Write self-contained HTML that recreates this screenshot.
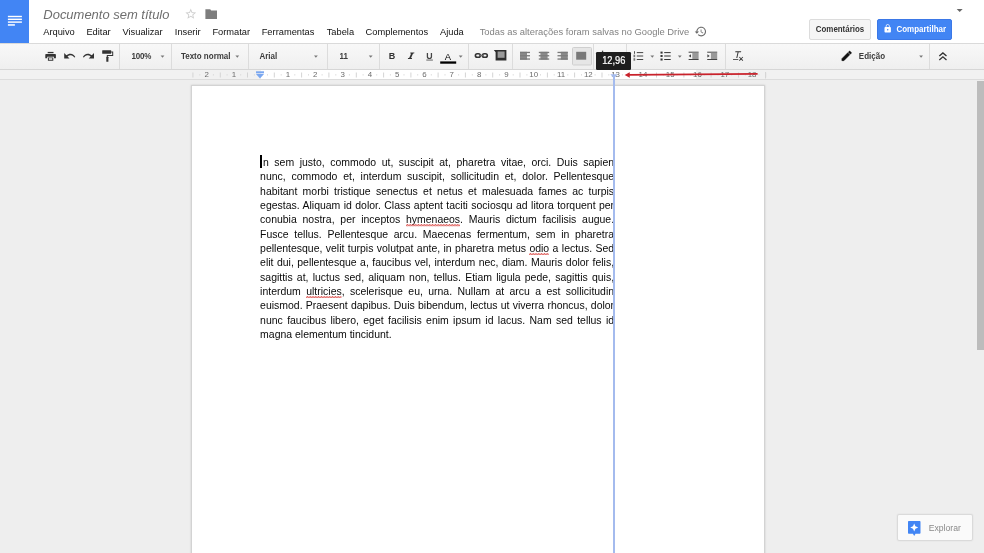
<!DOCTYPE html>
<html><head><meta charset="utf-8">
<style>
*{box-sizing:border-box;margin:0;padding:0}
html,body{width:984px;height:553px;overflow:hidden;background:#eeeeee;font-family:"Liberation Sans",sans-serif;}
body{position:relative}
.abs{position:absolute}
#hdr{left:0;top:0;width:984px;height:43px;background:#fff}
#logo{left:0;top:0;width:28.7px;height:42.6px;background:#4285f4}
#title{left:43.3px;top:6.600px;font-size:12.980px;font-style:italic;color:#6e6e6e;white-space:nowrap;line-height:16px}
.menu{top:25.800px;font-size:9.3px;color:#111;white-space:nowrap;line-height:12px}
#saved{left:479.700px;top:25.800px;font-size:9.400px;color:#828282;white-space:nowrap;line-height:12px}
#tb{left:0;top:43px;width:984px;height:26.500px;background:linear-gradient(#f8f8f8,#efefef);border-top:1px solid #dadada;border-bottom:1px solid #d6d6d6}
.sep{top:44px;width:1px;height:25px;background:#dcdcdc}
.tbt{transform:scaleY(1.1);top:51.900px;font-size:8px;font-weight:bold;color:#3c3c3c;white-space:nowrap;line-height:10px}
.fb{top:50.900px;font-size:9px;font-weight:bold;color:#333;line-height:11px;white-space:nowrap}
#ruler{left:0;top:69.500px;width:984px;height:10px;background:#f1f1f1;border-bottom:1px solid #dcdcdc}
#rulerw{left:260.500px;top:70px;width:435px;height:9px;background:#fff}
.rn{top:70.300px;font-size:7.900px;color:#6c6c6c;line-height:9px;width:12px;text-align:center}
#page{left:191.200px;top:84.800px;width:574.100px;height:480px;background:#fff;border:1px solid #d3d3d3;box-shadow:0 0 2px rgba(0,0,0,.15)}
#txt{left:260.100px;top:155.900px;width:354px;font-size:10.470px;line-height:14.340px;color:#0a0a0a}
.ln{text-align:justify;text-align-last:justify;white-space:nowrap;height:14.340px}
.ln.last{text-align:left;text-align-last:left}
.ln u{text-decoration:none;position:relative}
.ln u svg{position:absolute;left:0;top:10px;width:100%;height:2.400px}
#cursor{left:260px;top:155.300px;width:1.600px;height:13px;background:#000}
#vline{left:613.100px;top:76px;width:1.700px;height:477px;background:#a4bbee}
#tip{left:596.400px;top:52.200px;width:34.800px;height:17.400px;background:#1e1e1e;color:#fff;font-size:9.300px;text-align:center;line-height:17.400px;border-radius:1.300px}
#tip span{display:inline-block;transform:scaleY(1.100) translateY(.65px);-webkit-text-stroke:.2px #fff}
#sb{left:977px;top:80.500px;width:6.500px;height:269.300px;background:#bcbcbc}
#btnc{left:809px;top:18.500px;width:62px;height:21px;background:#f5f5f5;border:1px solid #dcdcdc;border-radius:2px;font-size:7.920px;font-weight:bold;color:#333;text-align:center;line-height:19px}
#btns{left:877.300px;top:18.500px;width:75px;height:21px;background:#4285f4;border:1px solid #3b78e7;border-radius:2px;font-size:7.980px;font-weight:bold;color:#fff;line-height:19px;padding-left:18.200px}
#expl{left:897.300px;top:513.700px;width:75.400px;height:27.800px;background:#fafafa;border:1px solid #dadada;border-radius:2px;font-size:8.640px;color:#8a8a8a;line-height:27px;padding-left:30.400px;box-shadow:0 0 1.500px rgba(0,0,0,.1)}
span.sy{display:inline-block;transform:scaleY(1.1)}
#w{position:absolute;left:0;top:0;width:984px;height:553px;will-change:transform}
</style></head><body><div id="w">
<div id="hdr" class="abs"></div>
<div id="logo" class="abs"></div>
<div id="title" class="abs">Documento sem título</div>
<div class="abs menu" style="left:43.2px">Arquivo</div>
<div class="abs menu" style="left:86.4px">Editar</div>
<div class="abs menu" style="left:122.5px">Visualizar</div>
<div class="abs menu" style="left:174.8px">Inserir</div>
<div class="abs menu" style="left:212.4px">Formatar</div>
<div class="abs menu" style="left:261.7px">Ferramentas</div>
<div class="abs menu" style="left:326.7px">Tabela</div>
<div class="abs menu" style="left:365.6px">Complementos</div>
<div class="abs menu" style="left:440px">Ajuda</div>
<div id="saved" class="abs">Todas as alterações foram salvas no Google Drive</div>
<div id="btnc" class="abs"><span class="sy">Comentários</span></div>
<div id="btns" class="abs"><span class="sy">Compartilhar</span></div>
<div id="tb" class="abs"></div>
<div class="abs sep" style="left:118.9px"></div><div class="abs sep" style="left:170.8px"></div><div class="abs sep" style="left:248.0px"></div><div class="abs sep" style="left:327.4px"></div><div class="abs sep" style="left:379.3px"></div><div class="abs sep" style="left:467.9px"></div><div class="abs sep" style="left:512.1px"></div><div class="abs sep" style="left:593.0px"></div><div class="abs sep" style="left:626.2px"></div><div class="abs sep" style="left:724.6px"></div><div class="abs sep" style="left:929.1px"></div>
<div class="abs tbt" style="left:131.500px;letter-spacing:-.2px">100%</div>
<div class="abs tbt" style="left:180.900px">Texto normal</div>
<div class="abs tbt" style="left:259.400px">Arial</div>
<div class="abs tbt" style="left:339.400px">11</div>
<div class="abs tbt" style="left:858.800px">Edição</div>
<div class="abs fb" style="left:388.800px">B</div>
<div class="abs fb" style="left:426.200px;color:#444;font-size:8.800px">U</div>
<div class="abs fb" style="left:444.700px;font-weight:normal;color:#000;font-size:9.400px">A</div>
<div id="ruler" class="abs"></div>
<div id="rulerw" class="abs"></div>
<div class="abs rn" style="left:200.7px">2</div><div class="abs rn" style="left:228.0px">1</div><div class="abs rn" style="left:282.0px">1</div><div class="abs rn" style="left:309.3px">2</div><div class="abs rn" style="left:336.6px">3</div><div class="abs rn" style="left:363.9px">4</div><div class="abs rn" style="left:391.2px">5</div><div class="abs rn" style="left:418.5px">6</div><div class="abs rn" style="left:445.8px">7</div><div class="abs rn" style="left:473.1px">8</div><div class="abs rn" style="left:500.4px">9</div><div class="abs rn" style="left:527.7px">10</div><div class="abs rn" style="left:555.0px">11</div><div class="abs rn" style="left:582.3px">12</div><div class="abs rn" style="left:609.6px">13</div><div class="abs rn" style="left:636.9px">14</div><div class="abs rn" style="left:664.2px">15</div><div class="abs rn" style="left:691.5px">16</div><div class="abs rn" style="left:718.8px">17</div><div class="abs rn" style="left:746.1px">18</div>
<div id="page" class="abs"></div>
<div id="txt" class="abs">
<div class="ln">In sem justo, commodo ut, suscipit at, pharetra vitae, orci. Duis sapien</div>
<div class="ln">nunc, commodo et, interdum suscipit, sollicitudin et, dolor. Pellentesque</div>
<div class="ln">habitant morbi tristique senectus et netus et malesuada fames ac turpis</div>
<div class="ln">egestas. Aliquam id dolor. Class aptent taciti sociosqu ad litora torquent per</div>
<div class="ln">conubia nostra, per inceptos <u>hymenaeos<svg><rect width="100%" height="2.4" fill="url(#zz)"/></svg></u>. Mauris dictum facilisis augue.</div>
<div class="ln">Fusce tellus. Pellentesque arcu. Maecenas fermentum, sem in pharetra</div>
<div class="ln">pellentesque, velit turpis volutpat ante, in pharetra metus <u>odio<svg><rect width="100%" height="2.4" fill="url(#zz)"/></svg></u> a lectus. Sed</div>
<div class="ln">elit dui, pellentesque a, faucibus vel, interdum nec, diam. Mauris dolor felis,</div>
<div class="ln">sagittis at, luctus sed, aliquam non, tellus. Etiam ligula pede, sagittis quis,</div>
<div class="ln">interdum <u>ultricies<svg><rect width="100%" height="2.4" fill="url(#zz)"/></svg></u>, scelerisque eu, urna. Nullam at arcu a est sollicitudin</div>
<div class="ln">euismod. Praesent dapibus. Duis bibendum, lectus ut viverra rhoncus, dolor</div>
<div class="ln">nunc faucibus libero, eget facilisis enim ipsum id lacus. Nam sed tellus id</div>
<div class="ln last">magna elementum tincidunt.</div>
</div>
<div id="cursor" class="abs"></div>
<div id="vline" class="abs"></div>
<div id="sb" class="abs"></div>
<div id="expl" class="abs">Explorar</div>
<svg class="abs" style="left:0;top:0" width="984" height="553" viewBox="0 0 984 553">
<!-- logo lines -->
<g fill="#fff"><rect x="7.9" y="15.8" width="14" height="1.4"/><rect x="7.9" y="18.6" width="14" height="1.4"/><rect x="7.9" y="21.4" width="14" height="1.4"/><rect x="7.9" y="24.2" width="7" height="1.5"/></g>
<!-- star -->
<g transform="translate(184.300,7.500) scale(0.540)"><path fill="#cdcdcd" d="M22 9.24l-7.19-.62L12 2 9.19 8.63 2 9.24l5.46 4.73L5.82 21 12 17.27 18.18 21l-1.63-7.03L22 9.24zM12 15.4l-3.76 2.27 1-4.28-3.32-2.88 4.38-.38L12 6.1l1.71 4.04 4.38.38-3.32 2.88 1 4.28L12 15.4z"/></g>
<!-- folder -->
<path fill="#7d7d7d" d="M205.400 9.300h4.800l1 1.300h5.800v8.500h-11.600z"/>
<!-- history -->
<g transform="translate(694.200,25.100) scale(0.538)"><path fill="#6a6a6a" d="M13 3c-4.97 0-9 4.03-9 9H1l3.89 3.89.07.14L9 12H6c0-3.870 3.130-7 7-7s7 3.130 7 7-3.130 7-7 7c-1.930 0-3.680-.79-4.940-2.060l-1.420 1.420C8.270 19.990 10.510 21 13 21c4.970 0 9-4.030 9-9s-4.030-9-9-9zm-1 5v5l4.280 2.540.72-1.210-3.500-2.080V8H12z"/></g>
<!-- top right caret -->
<path d="M956.700 9h6l-3 3z" fill="#666"/>
<!-- lock -->
<g transform="translate(882.900,23.800) scale(0.400)"><path fill="#fff" d="M18 8h-1V6c0-2.760-2.240-5-5-5S7 3.240 7 6v2H6c-1.100 0-2 .9-2 2v10c0 1.100.9 2 2 2h12c1.100 0 2-.9 2-2V10c0-1.100-.9-2-2-2zm-6 9c-1.100 0-2-.9-2-2s.9-2 2-2 2 .9 2 2-.9 2-2 2zm3.100-9H8.900V6c0-1.710 1.390-3.100 3.100-3.100 1.710 0 3.100 1.390 3.100 3.100v2z"/></g>
<!-- printer -->
<g fill="#333" transform="translate(0,.3)"><rect x="47.7" y="51.6" width="5.8" height="1.3"/><path d="M46.3 53.6h8.600c.6 0 1 .4 1 1v3.400h-1.900v-1.600h-6.800v1.600h-1.900v-3.400c0-.6.400-1 1-1z"/><path d="M47.900 57.100h5.400v3.300h-5.400z M48.900 58h3.400v1.500h-3.400z" fill-rule="evenodd"/></g>
<!-- undo -->
<path fill="#333" d="M64.200 53.100v5.300h5.300l-2-2c.9-.8 2-1.200 3.200-1.200 1.600 0 3 .9 3.600 2.400l1-.5c-.9-2-2.600-3.400-4.800-3.400-1.600 0-3 .6-4.100 1.600z"/>
<!-- redo -->
<path fill="#333" d="M94 53.100v5.300h-5.300l2-2c-.9-.8-2-1.200-3.200-1.200-1.600 0-3 .9-3.600 2.400l-1-.5c.9-2 2.600-3.400 4.800-3.400 1.600 0 3 .6 4.100 1.600z"/>
<!-- paint roller -->
<g fill="#333"><rect x="102.200" y="50.200" width="9" height="3.600" rx=".5"/><path d="M111.200 51.500h2v4.400h-5.400v1.200h-1v-2.200h5.400v-2.400h-1z"/><rect x="106.300" y="56.800" width="2.100" height="5" rx=".4"/></g>
<!-- carets -->
<path d="M160.6 55.4h3.800l-1.900 2.300z" fill="#777"/><path d="M235.4 55.4h3.800l-1.900 2.300z" fill="#777"/><path d="M314 55.4h3.800l-1.900 2.300z" fill="#777"/><path d="M368.8 55.4h3.800l-1.900 2.300z" fill="#777"/><path d="M458.8 55.4h3.800l-1.900 2.300z" fill="#777"/><path d="M650.4 55.4h3.800l-1.900 2.300z" fill="#777"/><path d="M677.9 55.4h3.800l-1.900 2.300z" fill="#777"/><path d="M919.2 55.4h3.800l-1.900 2.300z" fill="#777"/>
<!-- B I U A -->
<rect x="601.900" y="50.700" width="1.300" height="1.300" fill="#444"/>
<!-- I -->
<path fill="#333" d="M410.400 52.500h4l-.3 1h-1.050l-2 4.500h1.050l-.3 1h-4l.3-1h1.050l2-4.500h-1.050z"/>
<!-- A bar -->
<rect x="440.200" y="61.400" width="16" height="2.300" fill="#000"/>
<rect x="426.300" y="59.600" width="6.600" height=".9" fill="#555"/>
<!-- link -->
<g fill="none" stroke="#333" stroke-width="1.600"><rect x="475.400" y="53.700" width="4.900" height="3.600" rx="1.800"/><rect x="482.400" y="53.700" width="4.900" height="3.600" rx="1.800"/></g><rect x="479" y="54.800" width="4.700" height="1.400" fill="#666"/>
<!-- comment -->
<path fill="#2e2e2e" d="M493.800 50.100H506.400V60.400H495.600V52.300z"/><rect x="497.600" y="51.500" width="7" height="6.300" fill="#9a9a9a"/>
<!-- selected button -->
<rect x="572.500" y="47.500" width="19" height="17.500" rx="1" fill="#e6e6e6" stroke="#cfcfcf" stroke-width="1"/>
<!-- align icons -->
<g fill="#8a8a8a"><rect x="520" y="51.800" width="7" height="7.900"/><rect x="540.400" y="51.800" width="7.200" height="7.900" fill="#8a8a8a"/><rect x="560.800" y="51.800" width="7" height="7.900"/></g>
<g fill="#7a7a7a"><rect x="538.800" y="51.800" width="10.400" height="1.300"/><rect x="538.800" y="55.100" width="10.400" height="1.300"/><rect x="538.800" y="58.400" width="10.400" height="1.300"/><rect x="520" y="51.800" width="10" height="1.300"/><rect x="520" y="55.100" width="10" height="1.300"/><rect x="520" y="58.400" width="10" height="1.300"/>
<rect x="557.500" y="51.800" width="10.300" height="1.300"/><rect x="557.500" y="55.100" width="10.300" height="1.300"/><rect x="557.500" y="58.400" width="10.300" height="1.300"/></g>
<rect x="576.200" y="51.800" width="10" height="7.900" fill="#787878"/>
<!-- numbered list -->
<g fill="#444"><rect x="636.800" y="52.100" width="6.400" height="1"/><rect x="636.800" y="55.500" width="6.400" height="1"/><rect x="636.800" y="59" width="6.400" height="1"/><rect x="634" y="51.200" width=".9" height="2.600"/><rect x="633.500" y="54.700" width="1.700" height="2.500" fill="#777"/><rect x="633.500" y="58.200" width="1.700" height="2.500" fill="#777"/></g>
<!-- bullet list -->
<g fill="#333"><rect x="664.200" y="52.100" width="6.500" height="1"/><rect x="664.200" y="55.500" width="6.500" height="1"/><rect x="664.200" y="59" width="6.500" height="1"/><rect x="660.500" y="51.600" width="2.100" height="2"/><rect x="660.500" y="55" width="2.100" height="2"/><rect x="660.500" y="58.500" width="2.100" height="2"/></g>
<!-- indent icons -->
<g fill="#444"><rect x="688.600" y="51.700" width="10" height="1"/><rect x="688.600" y="59" width="10" height="1"/><rect x="692.300" y="52.700" width="6.300" height="6.300" fill="#999"/><path d="M691 54.200v3.400l-2.300-1.700z"/>
<rect x="707.200" y="51.700" width="10" height="1"/><rect x="707.200" y="59" width="10" height="1"/><rect x="710.900" y="52.700" width="6.300" height="6.300" fill="#999"/><path d="M707.400 54.200v3.400l2.300-1.700z"/></g>
<!-- Tx -->
<g fill="#333"><path d="M735.400 51.300h5.800l-.2.900h-2.400l-1.300 5.700h-1l1.300-5.700h-2.400z"/><rect x="733" y="59.100" width="5.300" height=".8"/><path d="M739 57.300l.6-.6 1.500 1.500 1.500-1.500.6.600-1.500 1.500 1.500 1.500-.6.600-1.500-1.500-1.500 1.500-.6-.6 1.500-1.500z"/></g>
<!-- pencil -->
<g transform="translate(840.300,49.500) scale(0.530)"><path fill="#111" stroke="#111" stroke-width="1" d="M3 17.250V21h3.750L17.810 9.940l-3.750-3.750L3 17.250zM20.710 7.040c.39-.39.39-1.020 0-1.410l-2.340-2.340c-.39-.39-1.020-.39-1.410 0l-1.830 1.830 3.750 3.750 1.830-1.830z"/></g>
<!-- double chevron -->
<g fill="none" stroke="#333" stroke-width="1.300"><path d="M939.300 56.100l3.600-3.200 3.600 3.200"/><path d="M939.300 60l3.600-3.200 3.600 3.200"/></g>
<!-- ruler ticks -->
<rect x="192.4" y="72.5" width="1" height="5" fill="#d4d4d4"/><rect x="199.3" y="74.2" width="1" height="1.3" fill="#d9d9d9"/><rect x="212.9" y="74.2" width="1" height="1.3" fill="#d9d9d9"/><rect x="219.8" y="72.5" width="1" height="5" fill="#d4d4d4"/><rect x="226.6" y="74.2" width="1" height="1.3" fill="#d9d9d9"/><rect x="240.2" y="74.2" width="1" height="1.3" fill="#d9d9d9"/><rect x="247.0" y="72.5" width="1" height="5" fill="#d4d4d4"/><rect x="253.9" y="74.2" width="1" height="1.3" fill="#d9d9d9"/><rect x="267.0" y="74.2" width="1" height="1.3" fill="#d9d9d9"/><rect x="273.8" y="72.5" width="1" height="5" fill="#d4d4d4"/><rect x="280.7" y="74.2" width="1" height="1.3" fill="#d9d9d9"/><rect x="294.3" y="74.2" width="1" height="1.3" fill="#d9d9d9"/><rect x="301.1" y="72.5" width="1" height="5" fill="#d4d4d4"/><rect x="308.0" y="74.2" width="1" height="1.3" fill="#d9d9d9"/><rect x="321.6" y="74.2" width="1" height="1.3" fill="#d9d9d9"/><rect x="328.4" y="72.5" width="1" height="5" fill="#d4d4d4"/><rect x="335.3" y="74.2" width="1" height="1.3" fill="#d9d9d9"/><rect x="348.9" y="74.2" width="1" height="1.3" fill="#d9d9d9"/><rect x="355.8" y="72.5" width="1" height="5" fill="#d4d4d4"/><rect x="362.6" y="74.2" width="1" height="1.3" fill="#d9d9d9"/><rect x="376.2" y="74.2" width="1" height="1.3" fill="#d9d9d9"/><rect x="383.1" y="72.5" width="1" height="5" fill="#d4d4d4"/><rect x="389.9" y="74.2" width="1" height="1.3" fill="#d9d9d9"/><rect x="403.5" y="74.2" width="1" height="1.3" fill="#d9d9d9"/><rect x="410.4" y="72.5" width="1" height="5" fill="#d4d4d4"/><rect x="417.2" y="74.2" width="1" height="1.3" fill="#d9d9d9"/><rect x="430.8" y="74.2" width="1" height="1.3" fill="#d9d9d9"/><rect x="437.6" y="72.5" width="1" height="5" fill="#d4d4d4"/><rect x="444.5" y="74.2" width="1" height="1.3" fill="#d9d9d9"/><rect x="458.1" y="74.2" width="1" height="1.3" fill="#d9d9d9"/><rect x="464.9" y="72.5" width="1" height="5" fill="#d4d4d4"/><rect x="471.8" y="74.2" width="1" height="1.3" fill="#d9d9d9"/><rect x="485.4" y="74.2" width="1" height="1.3" fill="#d9d9d9"/><rect x="492.2" y="72.5" width="1" height="5" fill="#d4d4d4"/><rect x="499.1" y="74.2" width="1" height="1.3" fill="#d9d9d9"/><rect x="512.7" y="74.2" width="1" height="1.3" fill="#d9d9d9"/><rect x="519.5" y="72.5" width="1" height="5" fill="#d4d4d4"/><rect x="526.4" y="74.2" width="1" height="1.3" fill="#d9d9d9"/><rect x="540.0" y="74.2" width="1" height="1.3" fill="#d9d9d9"/><rect x="546.9" y="72.5" width="1" height="5" fill="#d4d4d4"/><rect x="553.7" y="74.2" width="1" height="1.3" fill="#d9d9d9"/><rect x="567.3" y="74.2" width="1" height="1.3" fill="#d9d9d9"/><rect x="574.1" y="72.5" width="1" height="5" fill="#d4d4d4"/><rect x="581.0" y="74.2" width="1" height="1.3" fill="#d9d9d9"/><rect x="594.6" y="74.2" width="1" height="1.3" fill="#d9d9d9"/><rect x="601.5" y="72.5" width="1" height="5" fill="#d4d4d4"/><rect x="608.3" y="74.2" width="1" height="1.3" fill="#d9d9d9"/><rect x="621.9" y="74.2" width="1" height="1.3" fill="#d9d9d9"/><rect x="628.8" y="72.5" width="1" height="5" fill="#d4d4d4"/><rect x="635.6" y="74.2" width="1" height="1.3" fill="#d9d9d9"/><rect x="649.2" y="74.2" width="1" height="1.3" fill="#d9d9d9"/><rect x="656.0" y="72.5" width="1" height="5" fill="#d4d4d4"/><rect x="662.9" y="74.2" width="1" height="1.3" fill="#d9d9d9"/><rect x="676.5" y="74.2" width="1" height="1.3" fill="#d9d9d9"/><rect x="683.4" y="72.5" width="1" height="5" fill="#d4d4d4"/><rect x="690.2" y="74.2" width="1" height="1.3" fill="#d9d9d9"/><rect x="703.8" y="74.2" width="1" height="1.3" fill="#d9d9d9"/><rect x="710.6" y="72.5" width="1" height="5" fill="#d4d4d4"/><rect x="717.5" y="74.2" width="1" height="1.3" fill="#d9d9d9"/><rect x="731.1" y="74.2" width="1" height="1.3" fill="#d9d9d9"/><rect x="738.0" y="72.5" width="1" height="5" fill="#d4d4d4"/><rect x="744.8" y="74.2" width="1" height="1.3" fill="#d9d9d9"/><rect x="758.4" y="74.2" width="1" height="1.3" fill="#d9d9d9"/><rect x="765.2" y="72.5" width="1" height="5" fill="#d4d4d4"/>
<rect x="765" y="72" width="1" height="6.500" fill="#d6d6d6"/>
<!-- left margin marker -->
<rect x="256" y="71.300" width="8" height="2" fill="#7aa7f0"/><path d="M256 74h8l-4 4.400z" fill="#7aa7f0"/>
<!-- right marker -->
<path d="M610.400 74.300h7.100l-3.550 4.300z" fill="#a4bbee"/>
<!-- red arrow -->
<path d="M629 74.950L757.600 73.900" stroke="#c9222b" stroke-width="1.700" fill="none"/>
<path d="M624.700 74.950l5-2.800v5.600z" fill="#c9222b"/>
<!-- explore icon -->
<path d="M909 520.900h10.500c.6 0 1 .4 1 1v10.900c0 .6-.4 1-1 1h-4l-1.300 2.200-1.300-2.200h-3.900c-.6 0-1-.4-1-1v-10.900c0-.6.400-1 1-1z" fill="#4285f4"/>
<path d="M914.200 523.500l1.200 2.800 2.800 1.200-2.800 1.200-1.200 2.800-1.200-2.800-2.800-1.200 2.800-1.200z" fill="#fff"/>
<defs><pattern id="zz" width="2.800" height="2.400" patternUnits="userSpaceOnUse"><path d="M0 1.900L1.400 .5L2.800 1.900" stroke="#d8403c" stroke-width=".95" fill="none"/></pattern></defs>
</svg>
<div id="tip" class="abs"><span>12,96</span></div>
</div></body></html>
